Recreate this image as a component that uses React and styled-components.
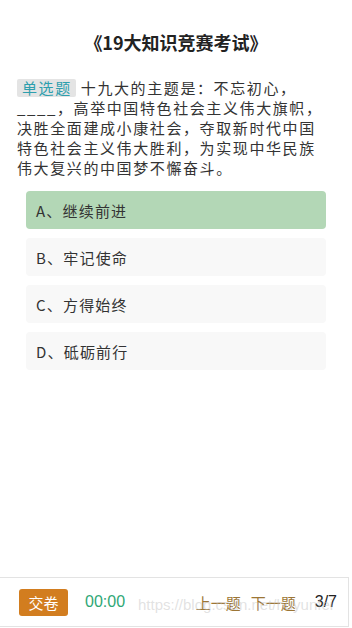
import React, { useState } from "react";
import styled, { createGlobalStyle } from "styled-components";

const GlobalStyle = createGlobalStyle`
  html, body {
    margin: 0;
    padding: 0;
    background: #fff;
  }
  body {
    font-family: "Noto Sans CJK SC", "Noto Sans", sans-serif;
    color: #333;
  }
`;

const question = {
  type: "单选题",
  text: "十九大的主题是：不忘初心，",
  rest: "____，高举中国特色社会主义伟大旗帜，决胜全面建成小康社会，夺取新时代中国特色社会主义伟大胜利，为实现中华民族伟大复兴的中国梦不懈奋斗。",
  options: ["A、继续前进", "B、牢记使命", "C、方得始终", "D、砥砺前行"],
};

export default function App() {
  const [picked, setPicked] = useState(0);

  return (
    <Page>
      <GlobalStyle />
      <Title>《19大知识竞赛考试》</Title>
      <Question>
        <Tag>{question.type}</Tag> {question.text}
        <br />
        {question.rest}
      </Question>
      <Options>
        {question.options.map((opt, i) => (
          <Option key={opt} $active={picked === i} onClick={() => setPicked(i)}>
            {opt}
          </Option>
        ))}
      </Options>
      <Footer>
        <SubmitBtn>交卷</SubmitBtn>
        <Timer>00:00</Timer>
        <Nav>
          <NavLink>上一题</NavLink>
          <NavLink>下一题</NavLink>
        </Nav>
        <Count>3/7</Count>
        <Watermark>https://blog.csdn.net/huyunfei</Watermark>
      </Footer>
    </Page>
  );
}

const Page = styled.div`
  min-height: 100vh;
  display: flex;
  flex-direction: column;
  box-sizing: border-box;
  padding-bottom: 1px;
`;

const Title = styled.h1`
  margin: 30px 0 0;
  font-size: 18px;
  line-height: 24px;
  font-weight: 700;
  color: #222;
  text-align: center;
`;

const Question = styled.p`
  margin: 24px 27px 0 17px;
  font-size: 15px;
  line-height: 20px;
  letter-spacing: 1.6px;
  color: #333;
`;

const Tag = styled.span`
  display: inline-block;
  background: #e4e4e4;
  color: #2e9fae;
  border-radius: 2px;
  padding: 0 4px 0 5px;
  line-height: 18px;
`;

const Options = styled.div`
  display: flex;
  flex-direction: column;
  gap: 9px;
  margin: 13px 26px 0;
`;

const Option = styled.div`
  height: 38px;
  display: flex;
  align-items: center;
  padding-left: 10px;
  border-radius: 4px;
  font-size: 15px;
  letter-spacing: 1.2px;
  color: #333;
  background: ${(p) => (p.$active ? "#b3d7b6" : "#f8f8f8")};
  cursor: pointer;
`;

const Footer = styled.div`
  position: relative;
  margin-top: auto;
  width: 349px;
  height: 50px;
  box-sizing: border-box;
  border: 1px solid #e3e3e3;
  border-left: none;
  display: flex;
  align-items: center;
  padding: 0 11px 0 19px;
`;

const SubmitBtn = styled.button`
  width: 49px;
  height: 27px;
  border: 0;
  border-radius: 3px;
  background: #d27d1f;
  color: #fff;
  font-family: "Noto Sans CJK SC", sans-serif;
  font-size: 15px;
  padding: 0;
  cursor: pointer;
`;

const Timer = styled.span`
  margin-left: 17px;
  font-family: "Liberation Sans", Arial, sans-serif;
  font-size: 16px;
  color: #2fa776;
`;

const Nav = styled.div`
  margin-left: auto;
  display: flex;
  gap: 10px;
`;

const NavLink = styled.span`
  font-size: 15px;
  color: #9c7636;
  cursor: pointer;
`;

const Count = styled.span`
  margin-left: 19px;
  font-family: "Liberation Sans", Arial, sans-serif;
  font-size: 16px;
  color: #222;
`;

const Watermark = styled.span`
  position: absolute;
  left: 138px;
  top: 18px;
  font-family: "Liberation Sans", Arial, sans-serif;
  font-size: 15px;
  color: rgba(190, 190, 190, 0.45);
  pointer-events: none;
  white-space: nowrap;
`;
